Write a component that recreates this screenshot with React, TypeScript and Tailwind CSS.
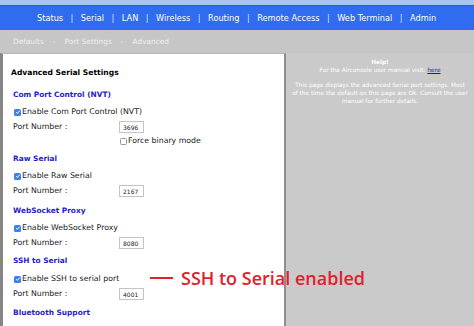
import React from "react";

const navItems = ["Status", "Serial", "LAN", "Wireless", "Routing", "Remote Access", "Web Terminal", "Admin"];

function Checkbox({ checked }: { checked: boolean }) {
  return checked ? (
    <span className="inline-flex items-center justify-center w-[7px] h-[7px] rounded-[1.5px] bg-[#3b82e6] mr-[1px]">
      <svg viewBox="0 0 8 8" className="w-[6px] h-[6px]">
        <path d="M1.5 4.2 L3.2 5.8 L6.5 2" stroke="white" strokeWidth="1.3" fill="none" />
      </svg>
    </span>
  ) : (
    <span className="inline-block w-[7px] h-[7px] rounded-[1.5px] border border-[#9a9a9a] bg-white mr-[1px]" />
  );
}

function PortRow({ value, mt }: { value: string; mt: string }) {
  return (
    <div className={`flex items-center h-[14px] ${mt}`}>
      <span className="w-[108px] pl-[2px]">Port Number :</span>
      <span className="flex items-center w-[25px] h-[12px] border border-[#c4c4c4] bg-white pl-[3px] text-[6px] text-[#222]">
        {value}
      </span>
    </div>
  );
}

function SectionTitle({ text, mt }: { text: string; mt: string }) {
  return (
    <div className={`flex items-center h-[14px] pl-[2px] font-bold text-[7.4px] text-[#1f23c9] ${mt}`}>{text}</div>
  );
}

function EnableRow({ text, mt }: { text: string; mt: string }) {
  return (
    <div className={`flex items-center h-[14px] pl-[3px] ${mt}`}>
      <Checkbox checked />
      <span>{text}</span>
    </div>
  );
}

export default function App() {
  return (
    <div className="relative w-[474px] h-[326px] overflow-hidden bg-[#cacaca] flex flex-col" style={{ fontFamily: '"DejaVu Sans", Verdana, sans-serif' }}>
      <div className="h-[5px] bg-[#a9c5ee] shrink-0" />
      <div className="h-[1px] bg-[#4a5a7a] shrink-0" />
      <div className="h-[24px] bg-[#2f6cf0] shrink-0 flex items-center pl-[37px] text-white text-[8.2px]">
        {navItems.map((n, i) => (
          <React.Fragment key={n}>
            {i > 0 && <span className="mx-[7.5px] text-[#dfe8ff]">|</span>}
            <span>{n}</span>
          </React.Fragment>
        ))}
      </div>
      <div className="h-[23px] bg-[#c6c6c6] shrink-0 flex items-center pl-[13px] text-[7.4px] text-[#efefef]">
        <span>Defaults</span>
        <span className="mx-[9px]">-</span>
        <span>Port Settings</span>
        <span className="mx-[9px]">-</span>
        <span>Advanced</span>
      </div>
      <div className="flex flex-1 min-h-0">
        <div className="w-[286px] shrink-0 bg-white border-l-[3px] border-r-[2px] border-t border-l-[#858585] border-r-[#8e8e8e] border-t-[#b8b8b8] pl-[8px] pt-[12px] text-[7.8px] text-[#1a1a1a] flex flex-col">
          <div className="flex items-center h-[14px] font-bold text-[7.6px] text-black">Advanced Serial Settings</div>
          <SectionTitle text="Com Port Control (NVT)" mt="mt-[8px]" />
          <EnableRow text="Enable Com Port Control (NVT)" mt="mt-[3px]" />
          <PortRow value="3696" mt="mt-[1px]" />
          <div className="flex items-center h-[14px] pl-[109px]">
            <Checkbox checked={false} />
            <span>Force binary mode</span>
          </div>
          <SectionTitle text="Raw Serial" mt="mt-[4px]" />
          <EnableRow text="Enable Raw Serial" mt="mt-[3px]" />
          <PortRow value="2167" mt="mt-[1px]" />
          <SectionTitle text="WebSocket Proxy" mt="mt-[6px]" />
          <EnableRow text="Enable WebSocket Proxy" mt="mt-[3px]" />
          <PortRow value="8080" mt="mt-[1px]" />
          <SectionTitle text="SSH to Serial" mt="mt-[4px]" />
          <EnableRow text="Enable SSH to serial port" mt="mt-[4px]" />
          <PortRow value="4001" mt="mt-[1px]" />
          <SectionTitle text="Bluetooth Support" mt="mt-[5px]" />
        </div>
        <div className="flex-1 flex flex-col items-center pt-[5px] text-white text-[5.8px] leading-[8px] text-center px-[6px]">
          <div className="font-bold">Help!</div>
          <div>
            For the Airconsole user manual visit: <span className="text-[#1a1aa8] underline">here</span>
          </div>
          <div className="mt-[7px]">
            This page displays the advanced Serial port settings. Most of the time the default on this page are Ok. Consult the user manual for further details.
          </div>
        </div>
      </div>
      <div className="absolute left-[150px] top-[268px] flex items-center">
        <div className="w-[23px] h-[2px] bg-[#e2202b]" />
        <span className="ml-[8px] text-[#e2202b] font-semibold text-[18px] leading-[20px]" style={{ fontFamily: '"Open Sans", sans-serif' }}>
          SSH to Serial enabled
        </span>
      </div>
    </div>
  );
}
